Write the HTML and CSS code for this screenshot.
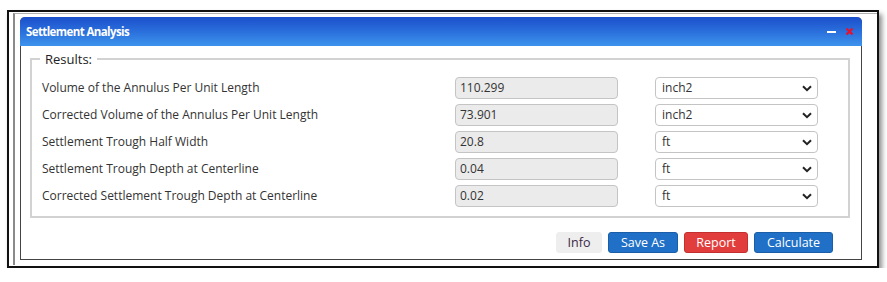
FILE: index.html
```html
<!DOCTYPE html>
<html lang="en">
  <head>
    <meta charset="UTF-8" />
    <title>Settlement Analysis</title>
    <link rel="stylesheet" href="styles.css">
  </head>
  <body>
    <div class="frame">
      <div class="inner">
        <div class="dialog">
          <div class="titlebar">
            <span class="title">Settlement Analysis</span>
            <span class="tb-icons">
              <span class="min-btn"></span>
              <svg class="close-btn" width="9" height="9" viewBox="0 0 9 9">
                <path d="M1.5 1.5 L7.5 7.5 M7.5 1.5 L1.5 7.5" stroke="#e8102a" stroke-width="2.2" />
              </svg>
            </span>
          </div>
          <div class="dialog-body">
            <fieldset class="results">
              <legend>Results:</legend>
              <div class="row">
                <label>Volume of the Annulus Per Unit Length</label>
                <input type="text" value="110.299" readonly />
                <div class="unit">
                  <select><option>inch2</option></select>
                  <svg class="chev" width="10" height="7" viewBox="0 0 10 7"><path d="M1 1.2 L5 5.2 L9 1.2" fill="none" stroke="#222" stroke-width="2" /></svg>
                </div>
              </div>
              <div class="row">
                <label>Corrected Volume of the Annulus Per Unit Length</label>
                <input type="text" value="73.901" readonly />
                <div class="unit">
                  <select><option>inch2</option></select>
                  <svg class="chev" width="10" height="7" viewBox="0 0 10 7"><path d="M1 1.2 L5 5.2 L9 1.2" fill="none" stroke="#222" stroke-width="2" /></svg>
                </div>
              </div>
              <div class="row">
                <label>Settlement Trough Half Width</label>
                <input type="text" value="20.8" readonly />
                <div class="unit">
                  <select><option>ft</option></select>
                  <svg class="chev" width="10" height="7" viewBox="0 0 10 7"><path d="M1 1.2 L5 5.2 L9 1.2" fill="none" stroke="#222" stroke-width="2" /></svg>
                </div>
              </div>
              <div class="row">
                <label>Settlement Trough Depth at Centerline</label>
                <input type="text" value="0.04" readonly />
                <div class="unit">
                  <select><option>ft</option></select>
                  <svg class="chev" width="10" height="7" viewBox="0 0 10 7"><path d="M1 1.2 L5 5.2 L9 1.2" fill="none" stroke="#222" stroke-width="2" /></svg>
                </div>
              </div>
              <div class="row">
                <label>Corrected Settlement Trough Depth at Centerline</label>
                <input type="text" value="0.02" readonly />
                <div class="unit">
                  <select><option>ft</option></select>
                  <svg class="chev" width="10" height="7" viewBox="0 0 10 7"><path d="M1 1.2 L5 5.2 L9 1.2" fill="none" stroke="#222" stroke-width="2" /></svg>
                </div>
              </div>
            </fieldset>
            <div class="actions">
              <button class="info-btn">Info</button>
              <button class="blue-btn save-btn">Save As</button>
              <button class="red-btn report-btn">Report</button>
              <button class="blue-btn calc-btn">Calculate</button>
            </div>
          </div>
        </div>
      </div>
    </div>
  </body>
</html>
```
FILE: styles.css
```css
/* General styling */
body {
  margin: 0;
  background-color: #fff;
  font-family: "Open Sans", "Liberation Sans", sans-serif;
  font-size: 12px;
  color: #2b2b2b;
}

/* Screenshot frame */
.frame {
  margin: 10px 0 0 7px;
  width: 864px;
  height: 253px;
  border: 2px solid #111;
  padding: 1px 0 0 4px;
  box-shadow: 3px 4px 5px rgba(0, 0, 0, 0.45);
}

.inner {
  height: 252px;
  border-left: 2px solid #8a8a8a;
  border-top: 1px solid #b0b0b0;
  padding: 3px 0 0 5px;
  box-sizing: border-box;
}

/* Dialog */
.dialog {
  width: 842px;
  height: 243px;
  border: 1px solid #444;
  border-top: none;
  border-radius: 5px 5px 0 0;
  background-color: #fff;
  box-sizing: border-box;
}

.titlebar {
  height: 29px;
  margin: 0 -1px;
  border-radius: 5px 5px 0 0;
  background: linear-gradient(to bottom, #1b4fcb 0%, #2a6fdc 50%, #3d93ec 100%);
  display: flex;
  align-items: center;
  justify-content: space-between;
  padding: 0 8px 0 6px;
}

.title {
  color: #fff;
  font-weight: bold;
  font-size: 11.5px;
  letter-spacing: -0.6px;
}

.tb-icons {
  display: flex;
  align-items: center;
  gap: 9px;
}

.min-btn {
  display: block;
  width: 9px;
  height: 2px;
  background-color: #fff;
}

.close-btn {
  display: block;
}

.dialog-body {
  padding: 4px 11px 0 9px;
}

/* Results fieldset */
.results {
  margin: 0;
  border: 2px solid #d2d2d2;
  padding: 6px 10px 7px 10px;
  height: 168px;
  box-sizing: border-box;
}

.results legend {
  font-size: 13px;
  color: #222;
  padding: 0 5px;
  margin-left: -2px;
}

.row {
  display: grid;
  grid-template-columns: 376px 163px 163px;
  column-gap: 37px;
  align-items: center;
  height: 27px;
}

.row label {
  color: #333;
}

.row input {
  height: 22px;
  box-sizing: border-box;
  border: 1px solid #c4c4c4;
  border-radius: 4px;
  background-color: #ebebeb;
  padding: 0 4px;
  font-family: inherit;
  font-size: 12px;
  color: #333;
}

.unit {
  position: relative;
  height: 22px;
}

.unit select {
  width: 100%;
  height: 22px;
  appearance: none;
  -webkit-appearance: none;
  border: 1px solid #c4c4c4;
  border-radius: 4px;
  background-color: #fff;
  padding: 0 6px;
  font-family: inherit;
  font-size: 12px;
  color: #333;
}

.chev {
  position: absolute;
  right: 6px;
  top: 8px;
}

/* Buttons */
.actions {
  display: flex;
  justify-content: flex-end;
  gap: 6px;
  margin-top: 14px;
  padding-right: 17px;
}

button {
  height: 21px;
  padding: 0;
  border-radius: 3px;
  font-family: inherit;
  font-size: 12.5px;
  cursor: pointer;
}

.info-btn {
  width: 46px;
  background-color: #eeeeee;
  border: 1px solid #eeeeee;
  color: #3a2845;
}

.blue-btn {
  background-color: #1f70c6;
  border: 1px solid #1a5ea8;
  color: #fff;
}

.red-btn {
  background-color: #e23d3d;
  border: 1px solid #c42f2f;
  color: #fff;
}

.save-btn {
  width: 70px;
}

.report-btn {
  width: 64px;
}

.calc-btn {
  width: 79px;
}
```
